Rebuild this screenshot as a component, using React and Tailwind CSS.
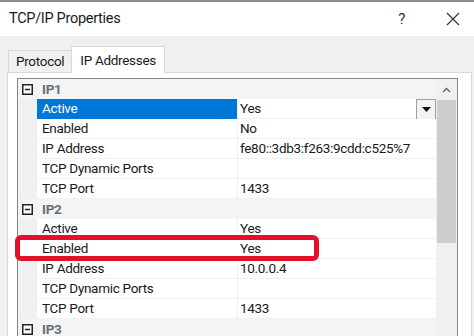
import React from 'react'

const GROUPS = [
  {
    name: 'IP1',
    rows: [
      { label: 'Active', value: 'Yes', selected: true },
      { label: 'Enabled', value: 'No' },
      { label: 'IP Address', value: 'fe80::3db3:f263:9cdd:c525%7' },
      { label: 'TCP Dynamic Ports', value: '' },
      { label: 'TCP Port', value: '1433' },
    ],
  },
  {
    name: 'IP2',
    rows: [
      { label: 'Active', value: 'Yes' },
      { label: 'Enabled', value: 'Yes', marked: true },
      { label: 'IP Address', value: '10.0.0.4' },
      { label: 'TCP Dynamic Ports', value: '' },
      { label: 'TCP Port', value: '1433' },
    ],
  },
  { name: 'IP3', rows: [] },
]

function Collapse() {
  return (
    <svg width="11" height="11" viewBox="0 0 11 11" className="shrink-0">
      <rect x="0.75" y="0.75" width="9.5" height="9.5" fill="white" stroke="#222" strokeWidth="1.5" />
      <line x1="3" y1="5.5" x2="8" y2="5.5" stroke="#222" strokeWidth="1.5" />
    </svg>
  )
}

function Row({ label, value, selected, marked }) {
  return (
    <div className="flex h-[20px] bg-[#f0f0f0]">
      <div className="w-[19px] shrink-0" />
      <div
        className={`w-[200px] shrink-0 pl-[5px] flex items-center border-b ${
          selected ? 'bg-[#0078d7] text-white border-[#0078d7]' : 'bg-white text-[#1a1a1a] border-[#f0f0f0]'
        }`}
      >
        <span className={marked ? 'relative z-20' : ''}>{label}</span>
      </div>
      <div className="w-[1px] shrink-0 bg-[#f0f0f0]" />
      <div className="flex-1 bg-white pl-[2px] flex items-center justify-between border-b border-[#f0f0f0] text-[#1a1a1a]">
        <span className={marked ? 'relative z-20' : ''}>{value}</span>
        {selected && (
          <div className="w-[20px] h-[21px] -mb-[2px] border border-[#a0a0a0] bg-[#f3f3f3] flex items-center justify-center shadow-[1px_1px_0_#cfcfcf]">
            <svg width="9" height="5" viewBox="0 0 9 5">
              <path d="M0 0 L9 0 L4.5 5 Z" fill="#111" />
            </svg>
          </div>
        )}
      </div>
    </div>
  )
}

export default function App() {
  return (
    <div
      className="relative w-[474px] h-[336px] overflow-hidden bg-[#f0f0f0] border-t-2 border-[#8c8c8c] text-[13.5px] tracking-[-0.3px]"
      style={{ fontFamily: 'Roboto, "Noto Sans", sans-serif' }}
    >
      {/* title bar */}
      <div className="h-[34px] bg-white flex items-center pl-[9px] pr-[14px]">
        <span className="text-[14.5px] text-[#1a1a1a] flex-1">TCP/IP Properties</span>
        <span className="text-[15px] text-[#333] mr-[41px]">?</span>
        <svg width="14" height="14" viewBox="0 0 14 14">
          <path d="M1 1 L13 13 M13 1 L1 13" stroke="#333" strokeWidth="1.2" />
        </svg>
      </div>

      {/* tabs */}
      <div className="flex items-end pl-[8px] pt-[9px] h-[36px]">
        <div className="h-[22px] px-[7px] flex items-center border border-b-0 border-[#d9d9d9] bg-[#f0f0f0] text-[#1a1a1a]">
          Protocol
        </div>
        <div className="h-[27px] px-[8px] -ml-[1px] flex items-center border border-b-0 border-[#d9d9d9] bg-white text-[#1a1a1a] relative z-10 -mb-[1px]">
          IP Addresses
        </div>
      </div>

      {/* panel */}
      <div className="ml-[7px] mr-[2px] h-[300px] bg-white border border-[#d9d9d9] pt-[5px] pl-[9px] pr-[13px]">
        <div className="flex border border-[#828790] h-[300px]">
          <div className="flex-1 flex flex-col">
            {GROUPS.map(g => (
              <div key={g.name}>
                <div className="h-[20px] flex items-center bg-[#f3f4f6] pl-[4px] gap-[9px]">
                  <Collapse />
                  <span className="font-bold text-[#6d6d6d]">{g.name}</span>
                </div>
                {g.rows.map(r => (
                  <Row key={g.name + r.label} {...r} />
                ))}
              </div>
            ))}
          </div>
          {/* scrollbar */}
          <div className="w-[21px] shrink-0 bg-[#f0f0f0] flex flex-col items-center">
            <div className="h-[21px] flex items-center justify-center">
              <svg width="9" height="6" viewBox="0 0 9 6">
                <path d="M1 5 L4.5 1.5 L8 5" fill="none" stroke="#606060" strokeWidth="1.3" />
              </svg>
            </div>
            <div className="w-[19px] h-[143px] bg-[#cdcdcd]" />
          </div>
        </div>
      </div>

      {/* red highlight */}
      <div className="absolute left-[15px] top-[233px] w-[304px] h-[26px] border-[5px] border-[#e3102c] rounded-[6px] bg-white z-10" />
    </div>
  )
}
